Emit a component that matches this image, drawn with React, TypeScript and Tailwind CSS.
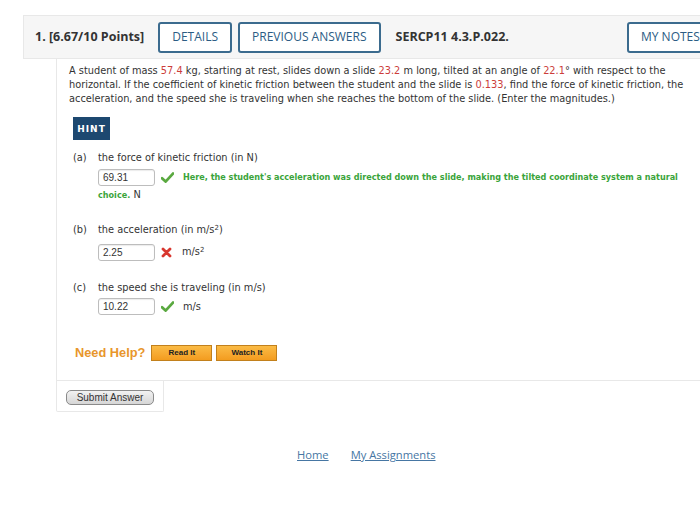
import React from "react";

const Check = () => (
  <svg width="13" height="11" viewBox="0 0 13 11" className="inline-block align-middle">
    <path d="M1 6.2 L4.6 9.6 L12 1.6" fill="none" stroke="#5aa940" strokeWidth="2.8" strokeLinecap="round" strokeLinejoin="round" />
  </svg>
);

const Cross = () => (
  <svg width="11" height="11" viewBox="0 0 11 11" className="inline-block align-middle">
    <path d="M2 2 L9 9 M9 2 L2 9" fill="none" stroke="#d8372f" strokeWidth="2.8" strokeLinecap="round" />
  </svg>
);

const AnswerBox = (props: { value: string }) => (
  <span className="inline-block align-middle w-[57px] h-[17px] border border-[#bdbdbd] rounded-[3px] bg-white pl-[4px] font-['Liberation_Sans'] text-[10px] leading-[15px] text-[#333] shadow-[inset_0_1px_1px_rgba(0,0,0,0.08)]">
    {props.value}
  </span>
);

const Red = (props: { children: React.ReactNode }) => (
  <span className="text-[#cc3d3a]">{props.children}</span>
);

const OrangeButton = (props: { label: string }) => (
  <span className="inline-flex items-center justify-center w-[61px] h-[16px] border border-[#c2801c] bg-gradient-to-b from-[#fbbb44] to-[#f39c1e] font-['Liberation_Sans'] font-bold text-[8px] text-[#222]">
    {props.label}
  </span>
);

export default function App() {
  return (
    <div className="w-[700px] h-[525px] bg-white overflow-hidden font-['Open_Sans',sans-serif] text-[#333]">
      <div className="pt-[15px] pl-[23px]">
        <div className="w-[700px] h-[44px] flex items-center bg-[#f6f6f6] border border-r-0 border-[#e8e8e8] pl-[11px]">
          <span className="font-bold text-[12.5px] text-[#333]">1. [6.67/10 Points]</span>
          <span className="ml-[14px] h-[31px] px-[12px] flex items-center border-2 border-[#3b6b8e] rounded-[3px] bg-white font-medium text-[12px] text-[#2c5c84]">
            DETAILS
          </span>
          <span className="ml-[6px] h-[31px] px-[12px] flex items-center border-2 border-[#3b6b8e] rounded-[3px] bg-white font-medium text-[12px] text-[#2c5c84]">
            PREVIOUS ANSWERS
          </span>
          <span className="ml-[15px] font-bold text-[12.5px] text-[#333]">SERCP11 4.3.P.022.</span>
          <span className="ml-auto mr-[6px] h-[31px] w-[90px] shrink-0 pl-[12px] flex items-center border-2 border-[#3b6b8e] rounded-[3px] bg-white font-medium text-[12px] text-[#2c5c84] whitespace-nowrap">
            MY NOTES
          </span>
        </div>

        <div className="ml-[33px] border-l border-b border-[#e8e8e8] pl-[12px] pt-[5px] pb-[19px] font-['DejaVu_Sans',sans-serif] text-[9.8px] leading-[14px]">
          <p className="w-[625px]">
            A student of mass <Red>57.4</Red> kg, starting at rest, slides down a slide <Red>23.2</Red> m long, tilted at an angle of{" "}
            <Red>22.1</Red>° with respect to the horizontal. If the coefficient of kinetic friction between the student and the slide is{" "}
            <Red>0.133</Red>, find the force of kinetic friction, the acceleration, and the speed she is traveling when she reaches the bottom
            of the slide. (Enter the magnitudes.)
          </p>

          <div className="mt-[11px] ml-[4px] w-[37px] h-[23px] flex items-center justify-center bg-[#1d4870] text-white font-bold text-[9px] tracking-[1px]">
            HINT
          </div>

          <div className="mt-[11px] ml-[4px]">
            <div className="flex">
              <span className="w-[25px]">(a)</span>
              <span>the force of kinetic friction (in N)</span>
            </div>
            <div className="ml-[25px] mt-[3px] w-[590px] leading-[17px]">
              <AnswerBox value="69.31" />
              <span className="ml-[6px] mr-[9px]">
                <Check />
              </span>
              <span className="font-bold text-[8.1px] text-[#3aa43a]">
                Here, the student's acceleration was directed down the slide, making the tilted coordinate system a natural choice.
              </span>{" "}
              N
            </div>
          </div>

          <div className="mt-[19px] ml-[4px]">
            <div className="flex">
              <span className="w-[25px]">(b)</span>
              <span>
                the acceleration (in m/s<sup className="text-[7px]">2</sup>)
              </span>
            </div>
            <div className="ml-[25px] mt-[6px] leading-[17px]">
              <AnswerBox value="2.25" />
              <span className="ml-[6px] mr-[10px]">
                <Cross />
              </span>
              m/s<sup className="text-[7px]">2</sup>
            </div>
          </div>

          <div className="mt-[20px] ml-[4px]">
            <div className="flex">
              <span className="w-[25px]">(c)</span>
              <span>the speed she is traveling (in m/s)</span>
            </div>
            <div className="ml-[25px] mt-[3px] leading-[17px]">
              <AnswerBox value="10.22" />
              <span className="ml-[6px] mr-[9px]">
                <Check />
              </span>
              m/s
            </div>
          </div>

          <div className="mt-[30px] ml-[6px] flex items-center">
            <span className="font-['Liberation_Sans'] font-bold text-[12.8px] text-[#e8962c]">Need Help?</span>
            <span className="ml-[6px]">
              <OrangeButton label="Read It" />
            </span>
            <span className="ml-[4px]">
              <OrangeButton label="Watch It" />
            </span>
          </div>
        </div>

        <div className="ml-[33px] w-[108px] h-[31px] border-l border-r border-b border-[#e8e8e8] rounded-b-[2px] pl-[9px] pt-[9px]">
          <span className="flex items-center justify-center w-[88px] h-[15px] rounded-[5px] border border-[#8a8a8a] bg-gradient-to-b from-[#f2f2f2] to-[#d6d6d6] font-['Liberation_Sans'] text-[10px] text-[#333]">
            Submit Answer
          </span>
        </div>

        <div className="mt-[35px] ml-[274px] flex gap-[22px] text-[11.2px] text-[#4676a3]">
          <span className="underline">Home</span>
          <span className="underline">My Assignments</span>
        </div>
      </div>
    </div>
  );
}
